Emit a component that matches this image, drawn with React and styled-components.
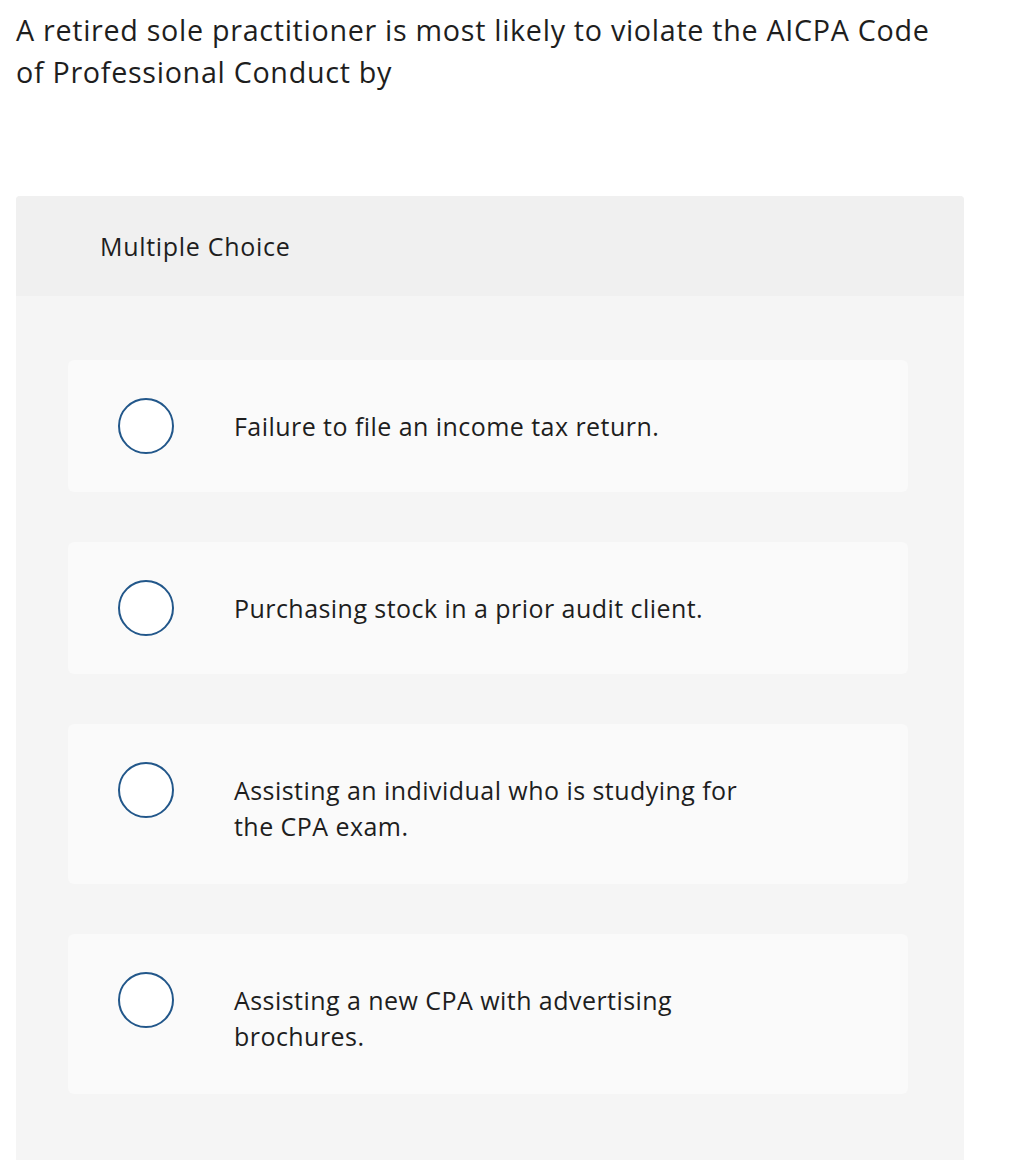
import React from "react"
import styled, { createGlobalStyle } from "styled-components"

const GlobalStyle = createGlobalStyle`
  body {
    margin: 0;
    background: #ffffff;
    font-family: "Open Sans", "Lato", sans-serif;
    color: #1e1e1e;
  }
`

const options = [
  "Failure to file an income tax return.",
  "Purchasing stock in a prior audit client.",
  "Assisting an individual who is studying for the CPA exam.",
  "Assisting a new CPA with advertising brochures.",
]

const App = () => (
  <Page>
    <GlobalStyle />
    <Question>
      A retired sole practitioner is most likely to violate the AICPA Code of
      Professional Conduct by
    </Question>
    <Panel>
      <PanelHeader>Multiple Choice</PanelHeader>
      <PanelBody>
        {options.map(text => (
          <Choice key={text}>
            <Radio />
            <ChoiceText>{text}</ChoiceText>
          </Choice>
        ))}
      </PanelBody>
    </Panel>
  </Page>
)

const Page = styled.div`
  width: 948px;
  padding: 9px 16px 0;
`

const Question = styled.p`
  margin: 0 0 103px;
  font-size: 28.7px;
  line-height: 42px;
  letter-spacing: 0.7px;
`

const Panel = styled.section`
  border-radius: 4px 4px 0 0;
  overflow: hidden;
  background: #f5f5f5;
`

const PanelHeader = styled.h2`
  margin: 0;
  height: 100px;
  display: flex;
  align-items: center;
  padding-left: 84px;
  background: #f0f0f0;
  font-size: 25px;
  font-weight: 400;
  letter-spacing: 0.7px;
`

const PanelBody = styled.div`
  display: flex;
  flex-direction: column;
  gap: 50px;
  padding: 64px 56px 120px 52px;
`

const Choice = styled.div`
  display: flex;
  align-items: flex-start;
  gap: 60px;
  padding: 38px 50px;
  background: #fafafa;
  border-radius: 6px;
`

const Radio = styled.span`
  flex: none;
  width: 52px;
  height: 52px;
  border: 2px solid #22578a;
  border-radius: 50%;
  background: #ffffff;
`

const ChoiceText = styled.div`
  max-width: 540px;
  padding: 10px 0 2px;
  font-size: 25px;
  line-height: 36px;
  letter-spacing: 0.45px;
`

export default App
